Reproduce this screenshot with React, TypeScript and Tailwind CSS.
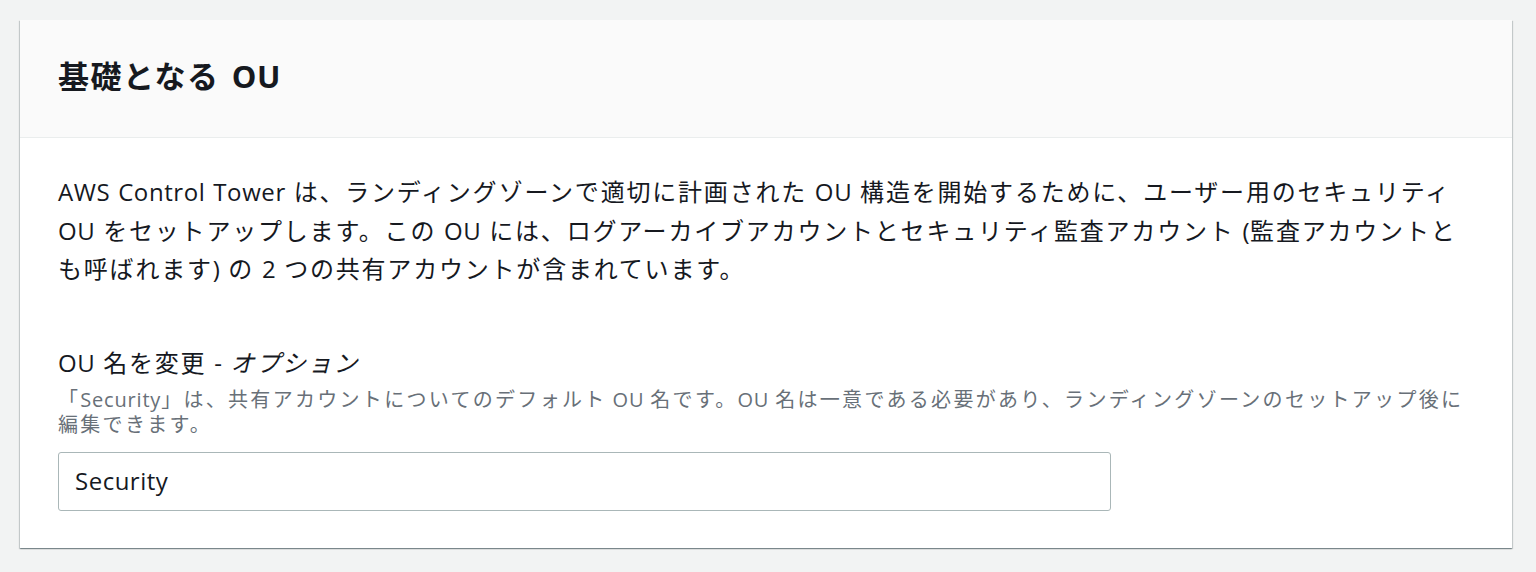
import React from "react";

const CJK = /([\u3000-\u30ff\u4e00-\u9fff\uff00-\uffef]+)/;

function Mixed({ text, cjk, latin }: { text: string; cjk: string; latin: string }) {
  const parts = text.split(CJK).filter((p) => p.length > 0);
  return (
    <>
      {parts.map((p, i) => (
        <span key={i} className={CJK.test(p) ? cjk : latin}>
          {p}
        </span>
      ))}
    </>
  );
}

export default function App() {
  const font = { fontFamily: '"Open Sans", "Noto Sans CJK JP", sans-serif' };
  const body = [
    "AWS Control Tower は、ランディングゾーンで適切に計画された OU 構造を開始するために、ユーザー用のセキュリティ",
    "OU をセットアップします。この OU には、ログアーカイブアカウントとセキュリティ監査アカウント (監査アカウントと",
    "も呼ばれます) の 2 つの共有アカウントが含まれています。",
  ];
  const desc = [
    "「Security」は、共有アカウントについてのデフォルト OU 名です。OU 名は一意である必要があり、ランディングゾーンのセットアップ後に",
    "編集できます。",
  ];
  return (
    <div className="min-h-[572px] w-full bg-[#f2f3f3] pl-[20px] pr-[24px] pt-[20px] pb-[23px]" style={font}>
      <div className="bg-white shadow-[0_1px_1px_0_rgba(0,28,36,0.3),1px_1px_1px_0_rgba(0,28,36,0.15),-1px_1px_1px_0_rgba(0,28,36,0.15)]">
        <div className="flex h-[118px] items-center border-b border-[#eaeded] bg-[#fafafa] px-[38px] pb-[5px]">
          <h2 className="text-[31px] font-bold leading-[38px] text-[#16191f] [word-spacing:4px]">
            <span className="tracking-[1.5px]">基礎となる</span> <span className="tracking-[0.8px]">OU</span>
          </h2>
        </div>
        <div className="px-[38px] pt-[35px] pb-[37px] text-[#16191f]">
          <p className="text-[24px] leading-[38.5px] [word-spacing:1px]">
            {body.map((line, i) => (
              <span key={i} className="block whitespace-nowrap">
                <Mixed text={line} cjk="tracking-[1.8px]" latin="tracking-[0.6px]" />
              </span>
            ))}
          </p>
          <div className="mt-[56px]">
            <div className="text-[24px] leading-[36px] [word-spacing:1px]">
              <Mixed text="OU 名を変更 - " cjk="tracking-[1.8px]" latin="tracking-[0.6px]" />
              <i className="tracking-[1.8px]">オプション</i>
            </div>
            <div className="mt-[6px] text-[20px] leading-[25px] text-[#687078]">
              {desc.map((line, i) => (
                <span key={i} className="block whitespace-nowrap">
                  <Mixed text={line} cjk="tracking-[2.3px]" latin="tracking-[0.8px]" />
                </span>
              ))}
            </div>
            <div className="mt-[15px] flex h-[59px] w-[1053px] items-center rounded-[3px] border-[1.5px] border-[#aab7b8] px-[16px] text-[24px] tracking-[0.5px] text-[#16191f]">
              Security
            </div>
          </div>
        </div>
      </div>
    </div>
  );
}
